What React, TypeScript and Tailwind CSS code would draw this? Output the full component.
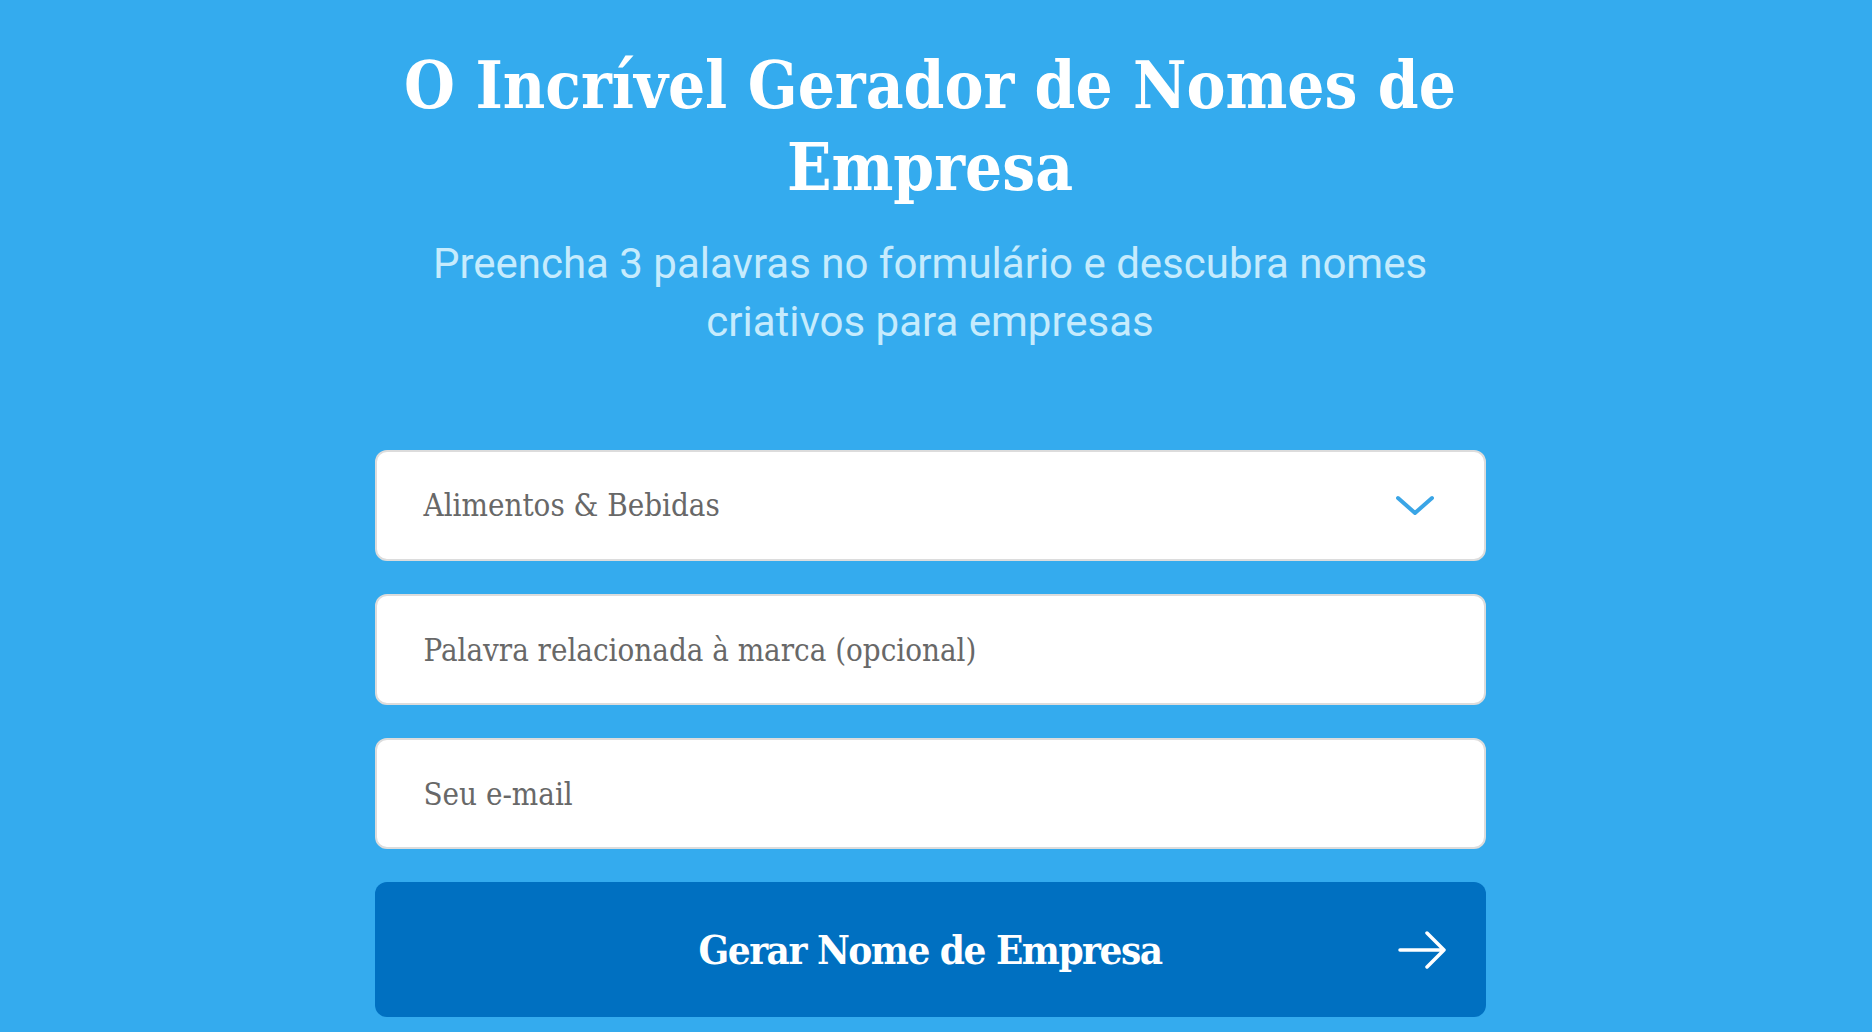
import React, { useState } from 'react';

const slab = "font-['DejaVu_Serif_Condensed','DejaVu_Serif',serif]";

const App: React.FC = () => {
    const [brandWord, setBrandWord] = useState('');
    const [email, setEmail] = useState('');

    return (
        <div className="min-h-screen w-full bg-[#34abee] flex flex-col items-center pr-[12px]">
            <h1 className={`${slab} mt-[44px] w-[1140px] text-center text-white font-bold text-[65px] leading-[82px]`}>
                O Incrível Gerador de Nomes de Empresa
            </h1>
            <p className="mt-[27px] w-[1020px] text-center text-[#c6ebfd] font-['Roboto',sans-serif] text-[42px] leading-[58px]">
                Preencha 3 palavras no formulário e descubra nomes criativos para empresas
            </p>

            <form className="mt-[99px] w-[1111px] flex flex-col" onSubmit={(e) => e.preventDefault()}>
                {/* industry select */}
                <div className="h-[111px] mb-[33px] bg-white rounded-[12px] border-2 border-[#dcdcdc] flex items-center justify-between pl-[47px] pr-[50px]">
                    <span className={`${slab} text-[31px] text-[#686868]`}>Alimentos &amp; Bebidas</span>
                    <svg width="38" height="22" viewBox="0 0 38 22" fill="none">
                        <path d="M2 3 L19 18 L36 3" stroke="#3aa5e6" strokeWidth="4" strokeLinecap="round" strokeLinejoin="round" />
                    </svg>
                </div>

                <input
                    type="text"
                    value={brandWord}
                    onChange={(e) => setBrandWord(e.target.value)}
                    placeholder="Palavra relacionada à marca (opcional)"
                    className={`${slab} h-[111px] mb-[33px] bg-white rounded-[12px] border-2 border-[#dcdcdc] pl-[47px] text-[31px] text-[#686868] placeholder:text-[#686868] outline-none`}
                />

                <input
                    type="email"
                    value={email}
                    onChange={(e) => setEmail(e.target.value)}
                    placeholder="Seu e-mail"
                    className={`${slab} h-[111px] mb-[33px] bg-white rounded-[12px] border-2 border-[#dcdcdc] pl-[47px] text-[31px] text-[#686868] placeholder:text-[#686868] outline-none`}
                />

                <button
                    type="submit"
                    className="relative h-[135px] bg-[#0070c1] rounded-[12px] flex items-center justify-center"
                >
                    <span className={`${slab} text-white font-bold text-[40px] tracking-[-1.5px]`}>Gerar Nome de Empresa</span>
                    <svg className="absolute right-[38px] top-1/2 -translate-y-1/2" width="50" height="38" viewBox="0 0 50 38" fill="none">
                        <path d="M2 19 H46 M29 2 L46 19 L29 36" stroke="#ffffff" strokeWidth="3.5" strokeLinecap="round" strokeLinejoin="round" />
                    </svg>
                </button>
            </form>
        </div>
    );
};

export default App;
